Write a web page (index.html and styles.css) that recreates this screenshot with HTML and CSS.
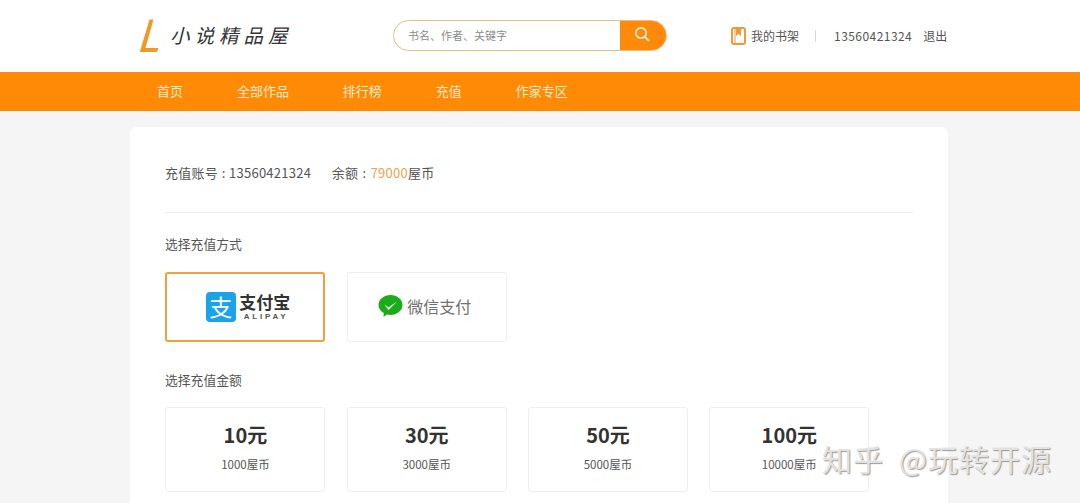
FILE: index.html
```html
<!DOCTYPE html>
<html lang="zh">
<head>
<meta charset="utf-8">
<title>小说精品屋</title>
<link rel="stylesheet" href="styles.css">
</head>
<body>
<header class="top">
  <div class="wrap top-row">
    <a class="logo">
      <svg class="logo-mark" width="20" height="34" viewBox="0 0 20 34"><path d="M10.500 0.500 L14.500 0.500 L6.500 29 L19.500 29 L18 33 L0.800 33 Z" fill="#f0982a"/></svg>
      <span class="logo-text">小说精品屋</span>
    </a>
    <div class="search">
      <span class="search-input">书名、作者、关键字</span>
      <span class="search-btn">
        <svg width="16" height="16" viewBox="0 0 16 16" fill="none" stroke="#fff0d8" stroke-width="1.7"><circle cx="7" cy="7" r="5.2"/><path d="M11 11 L14.6 14.4" stroke-linecap="round"/></svg>
      </span>
    </div>
    <div class="user">
      <svg class="shelf-icon" width="15" height="18" viewBox="0 0 15 18"><rect x="1" y="1" width="13" height="16" rx="2" fill="#fff" stroke="#ee9a3a" stroke-width="2"/><path d="M5 1 H10 V9 L7.500 7 L5 9 Z" fill="#ee9a3a"/><path d="M4 2 V16" stroke="#ee9a3a" stroke-width="1"/></svg>
      <span class="shelf">我的书架</span>
      <span class="sep"></span>
      <span class="phone">13560421324</span>
      <span class="logout">退出</span>
    </div>
  </div>
</header>
<nav class="nav">
  <div class="wrap nav-row">
    <a>首页</a><a>全部作品</a><a>排行榜</a><a>充值</a><a>作家专区</a>
  </div>
</nav>
<main class="card">
  <div class="account">
    <span class="acct-no">充值账号<span class="colon">:</span>13560421324</span>
    <span>余额<span class="colon colon-wide">:</span><em class="balance">79000</em>屋币</span>
  </div>
  <h2 class="label">选择充值方式</h2>
  <div class="options options-pay">
    <div class="option selected pay">
      <span class="ali-icon">支</span>
      <span class="ali-text"><b>支付宝</b><i>ALIPAY</i></span>
    </div>
    <div class="option pay wx">
      <svg class="wx-icon" width="25" height="24" viewBox="0 0 25 24"><path d="M12.500 1 C19 1 24.500 5.400 24.500 11 C24.500 16.600 19 21 12.500 21 C11.200 21 10 20.800 8.900 20.500 L5.500 23 L5.800 19 C2.500 17.200 0.500 14.300 0.500 11 C0.500 5.400 6 1 12.500 1 Z" fill="#1aad19"/><path d="M6.500 10.500 L10.500 13.500 L19 7.500 L10.500 16 Z" fill="#fff"/></svg>
      <span class="wx-text">微信支付</span>
    </div>
  </div>
  <h2 class="label label-amount">选择充值金额</h2>
  <div class="options">
    <div class="option amount"><strong>10元</strong><span>1000屋币</span></div>
    <div class="option amount"><strong>30元</strong><span>3000屋币</span></div>
    <div class="option amount"><strong>50元</strong><span>5000屋币</span></div>
    <div class="option amount"><strong>100元</strong><span>10000屋币</span></div>
  </div>
</main>
<div class="watermark">知乎 @玩转开源</div>
</body>
</html>
```
FILE: styles.css
```css
* { box-sizing: border-box; }
html, body { height: 503px; overflow: hidden; }
body {
  margin: 0;
  background: #f5f5f5;
  color: #444;
  font-family: "Noto Sans CJK SC", "Liberation Sans", sans-serif;
  font-size: 13px;
  position: relative;
}
.wrap { width: 820px; margin: 0 auto; }
.top { height: 72px; background: #fff; }
.top-row { height: 72px; display: flex; align-items: center; padding-bottom: 1px; }
.logo { display: flex; align-items: center; width: 263px; padding-left: 9px; }
.logo-mark { margin-right: 11px; }
.logo-text {
  font-size: 19.500px;
  font-style: italic;
  letter-spacing: 5px;
  color: #333;
  white-space: nowrap;
  position: relative;
  top: -1px;
}
.search {
  width: 274px;
  height: 31px;
  display: flex;
  border: 1px solid #e6bf82;
  border-radius: 16px;
  overflow: hidden;
  background: #fff;
}
.search-input {
  flex: 1;
  padding-left: 14px;
  font-size: 11px;
  line-height: 29px;
  color: #8c8c8c;
}
.search-btn {
  width: 46px;
  background: #ff8a0a;
  display: flex;
  align-items: center;
  justify-content: center;
  padding-right: 2px;
  padding-bottom: 3px;
}
.user { display: flex; align-items: center; margin-left: 64px; font-size: 12px; color: #555; }
.shelf-icon { margin-right: 5px; }
.sep { width: 1px; height: 12px; background: #d8d8d8; margin: 0 18px 0 16px; }
.phone { margin-right: 11px; letter-spacing: 0.450px; }
.nav { height: 39px; background: #ff8a05; }
.nav-row { display: flex; height: 39px; align-items: center; padding: 0 0 3px 27px; }
.nav a { color: #ffe9c9; font-size: 13px; margin-right: 53.900px; }
.card {
  width: 818px;
  height: 400px;
  margin: 16px 0 0 130px;
  padding: 35px 35px 0;
  background: #fff;
  border-radius: 6px;
}
.account {
  height: 51px;
  display: flex;
  gap: 20.500px;
  border-bottom: 1px solid #eee;
  line-height: 22px;
  color: #555;
  letter-spacing: 0.250px;
}
.colon { display: inline-block; width: 11px; text-align: center; letter-spacing: 0; }
.colon-wide { width: 12.500px; }
.balance { font-style: normal; color: #f0a050; }
.label { margin: 0; font-weight: 400; font-size: 12.800px; line-height: 20px; color: #555; }
.account + .label { margin-top: 21px; }
.label-amount { margin-top: 28px; }
.options { display: flex; gap: 21.300px; margin-top: 17px; padding-left: 0.400px; }
.options-pay { margin-top: 18px; }
.option {
  width: 160px;
  border: 1px solid #efefef;
  border-radius: 3px;
  background: #fff;
}
.pay { height: 70px; display: flex; align-items: center; justify-content: center; }
.selected { border: 2px solid #f0a040; padding-left: 4px; }
.wx { padding: 0 4px 2px 0; }
.ali-icon {
  width: 30px;
  height: 30px;
  background: #1aa3e8;
  border-radius: 4px;
  color: #fff;
  font-size: 23px;
  line-height: 29px;
  text-align: center;
  margin-right: 3.500px;
  margin-left: 1px;
}
.ali-text { display: flex; flex-direction: column; align-items: center; color: #333; }
.ali-text b { font-size: 17px; line-height: 18px; font-weight: 700; }
.ali-text i { font-family: "Liberation Sans", sans-serif; font-style: normal; font-weight: 700; font-size: 8px; line-height: 11px; letter-spacing: 2.800px; margin-right: -2.800px; color: #555; }
.wx-icon { margin-right: 4px; }
.wx-text { font-size: 16px; color: #707070; }
.amount {
  height: 85px;
  display: flex;
  flex-direction: column;
  align-items: center;
  padding-top: 13px;
}
.amount strong { font-size: 20px; line-height: 28px; color: #333; }
.amount span { font-size: 11.500px; line-height: 16px; margin-top: 7px; color: #555; }
.watermark {
  position: absolute;
  left: 822px;
  top: 437px;
  font-size: 30px;
  line-height: 42px;
  letter-spacing: 1px;
  word-spacing: 7px;
  white-space: nowrap;
  color: #e2e2e2;
  text-shadow: 1px 1px 1px rgba(90,90,90,.6);
}
```
